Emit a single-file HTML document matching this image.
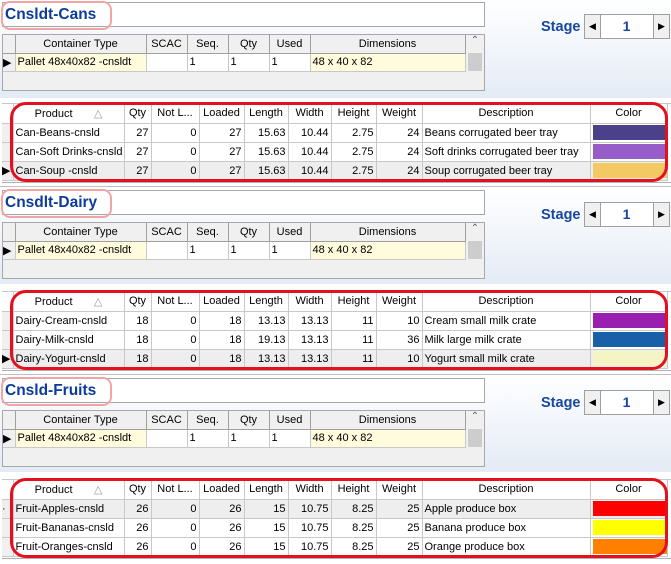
<!DOCTYPE html>
<html><head><meta charset="utf-8"><style>
*{box-sizing:border-box;margin:0;padding:0}
body{width:671px;height:564px;position:relative;overflow:hidden;background:#fff;font-family:"Liberation Sans",sans-serif;font-size:11px;color:#000}
.a{position:absolute}
.bg{left:0;width:671px;height:98px;background:linear-gradient(#fff,#e4ebf6)}
.tb{left:2px;width:483px;height:25px;border:1px solid #a8a8a8;background:#fff}
.hl{left:1px;width:111px;height:29px;border:2px solid #f2a5a5;border-radius:9px}
.tt{left:5px;font-weight:bold;font-size:15.5px;color:#0b3c9c}
.st{left:541px;font-weight:bold;font-size:14.5px;color:#1747a0}
.sp{left:584px;width:86px;height:25px;border:1px solid #a0a0a0;background:#fff}
.sp .l,.sp .r{position:absolute;top:0;width:16px;height:23px;background:#f0f0f0;border-right:1px solid #a0a0a0;font-size:9px;text-align:center;line-height:23px}
.sp .l{left:0}.sp .r{right:0;border-right:none;border-left:1px solid #a0a0a0}
.sp .v{position:absolute;left:16px;right:17px;top:0;line-height:23px;text-align:center;font-weight:bold;font-size:14px;color:#1747a0}
.cg{left:2px;width:483px;height:57px;border:1px solid #a8a8a8;background:#f0f0f0}
table{border-collapse:collapse;table-layout:fixed;position:absolute;left:0;top:0}
td{height:18px;border-right:1px solid #c8c8c8;border-bottom:1px solid #c8c8c8;padding:0 2px;white-space:nowrap;overflow:hidden;background:#fff}
tr.h td{text-align:center;background:#fff}
.cg tr.h td{background:#f0f0f0;border-color:#a0a0a0}
.cg td.y{background:#fffbdc}
td.i{background:#f0f0f0;padding:0;font-size:11px}
td.n{text-align:right}
.sb{position:absolute;left:463px;top:0;width:18px;height:55px;background:#f0f0f0;color:#666;font-size:10px;text-align:center}
.sb .t{position:absolute;left:2px;top:18px;width:14px;height:18px;background:#cdcdcd}
.pg{left:2px;width:669px;height:80px;border-top:1px solid #c8c8c8;border-bottom:1px solid #b0b0b0;background:#fff}
tr.g td{background:#eeeeee}
.pg td{height:19px}
.rr{left:10px;width:658px;height:80px;border:3px solid #e3101f;border-radius:16px}
.sw{display:block;height:15px;margin:0 -2px 0 0}
</style></head><body>

<div class="a bg" style="top:0"></div>
<div class="a tb" style="top:2px"></div>
<div class="a hl" style="top:1px"></div>
<div class="a tt" style="top:6px">Cnsldt-Cans</div>
<div class="a st" style="top:19px">Stage</div>
<div class="a sp" style="top:14px"><div class="l">◀</div><div class="v">1</div><div class="r">▶</div></div>
<div class="a cg" style="top:34px"><table style="width:462px">
<colgroup><col style="width:12px"><col style="width:131px"><col style="width:41px"><col style="width:41px"><col style="width:41px"><col style="width:41px"><col style="width:155px"></colgroup>
<tr class="h"><td class="i"></td><td>Container Type</td><td>SCAC</td><td>Seq.</td><td>Qty</td><td>Used</td><td>Dimensions</td></tr>
<tr><td class="i">▶</td><td class="y">Pallet 48x40x82 -cnsldt</td><td>&nbsp;</td><td>1</td><td>1</td><td>1</td><td class="y">48 x 40 x 82</td></tr>
</table><div class="sb">⌃<div class="t"></div></div></div>
<div class="a pg" style="top:103px"><table style="width:665px">
<colgroup><col style="width:11px"><col style="width:111px"><col style="width:27px"><col style="width:48px"><col style="width:45px"><col style="width:44px"><col style="width:43px"><col style="width:45px"><col style="width:46px"><col style="width:168px"><col style="width:77px"></colgroup>
<tr class="h"><td class="i"></td><td>Product &nbsp; &nbsp; &nbsp; <span style="color:#999">△</span></td><td>Qty</td><td>Not L...</td><td>Loaded</td><td>Length</td><td>Width</td><td>Height</td><td>Weight</td><td>Description</td><td>Color</td></tr>
<tr><td class="i"></td><td>Can-Beans-cnsld</td><td class="n">27</td><td class="n">0</td><td class="n">27</td><td class="n">15.63</td><td class="n">10.44</td><td class="n">2.75</td><td class="n">24</td><td>Beans corrugated beer tray</td><td><span class="sw" style="background:#4b418a"></span></td></tr>
<tr><td class="i"></td><td>Can-Soft Drinks-cnsld</td><td class="n">27</td><td class="n">0</td><td class="n">27</td><td class="n">15.63</td><td class="n">10.44</td><td class="n">2.75</td><td class="n">24</td><td>Soft drinks corrugated beer tray</td><td><span class="sw" style="background:#965cc8"></span></td></tr>
<tr class="g"><td class="i">▶</td><td>Can-Soup -cnsld</td><td class="n">27</td><td class="n">0</td><td class="n">27</td><td class="n">15.63</td><td class="n">10.44</td><td class="n">2.75</td><td class="n">24</td><td>Soup corrugated beer tray</td><td><span class="sw" style="background:#f3c963"></span></td></tr>
</table></div>
<div class="a rr" style="top:102px"></div>

<div class="a bg" style="top:186px;border-top:1px solid #c0c0c0"></div>
<div class="a tb" style="top:190px"></div>
<div class="a hl" style="top:189px"></div>
<div class="a tt" style="top:194px">Cnsdlt-Dairy</div>
<div class="a st" style="top:207px">Stage</div>
<div class="a sp" style="top:202px"><div class="l">◀</div><div class="v">1</div><div class="r">▶</div></div>
<div class="a cg" style="top:222px"><table style="width:462px">
<colgroup><col style="width:12px"><col style="width:131px"><col style="width:41px"><col style="width:41px"><col style="width:41px"><col style="width:41px"><col style="width:155px"></colgroup>
<tr class="h"><td class="i"></td><td>Container Type</td><td>SCAC</td><td>Seq.</td><td>Qty</td><td>Used</td><td>Dimensions</td></tr>
<tr><td class="i">▶</td><td class="y">Pallet 48x40x82 -cnsldt</td><td>&nbsp;</td><td>1</td><td>1</td><td>1</td><td class="y">48 x 40 x 82</td></tr>
</table><div class="sb">⌃<div class="t"></div></div></div>
<div class="a pg" style="top:291px"><table style="width:665px">
<colgroup><col style="width:11px"><col style="width:111px"><col style="width:27px"><col style="width:48px"><col style="width:45px"><col style="width:44px"><col style="width:43px"><col style="width:45px"><col style="width:46px"><col style="width:168px"><col style="width:77px"></colgroup>
<tr class="h"><td class="i"></td><td>Product &nbsp; &nbsp; &nbsp; <span style="color:#999">△</span></td><td>Qty</td><td>Not L...</td><td>Loaded</td><td>Length</td><td>Width</td><td>Height</td><td>Weight</td><td>Description</td><td>Color</td></tr>
<tr><td class="i"></td><td>Dairy-Cream-cnsld</td><td class="n">18</td><td class="n">0</td><td class="n">18</td><td class="n">13.13</td><td class="n">13.13</td><td class="n">11</td><td class="n">10</td><td>Cream small milk crate</td><td><span class="sw" style="background:#9a1fb0"></span></td></tr>
<tr><td class="i"></td><td>Dairy-Milk-cnsld</td><td class="n">18</td><td class="n">0</td><td class="n">18</td><td class="n">19.13</td><td class="n">13.13</td><td class="n">11</td><td class="n">36</td><td>Milk large milk crate</td><td><span class="sw" style="background:#1a60a8"></span></td></tr>
<tr class="g"><td class="i">▶</td><td>Dairy-Yogurt-cnsld</td><td class="n">18</td><td class="n">0</td><td class="n">18</td><td class="n">13.13</td><td class="n">13.13</td><td class="n">11</td><td class="n">10</td><td>Yogurt small milk crate</td><td><span class="sw" style="background:#f4f4c4"></span></td></tr>
</table></div>
<div class="a rr" style="top:290px"></div>

<div class="a bg" style="top:374px;border-top:1px solid #c0c0c0"></div>
<div class="a tb" style="top:378px"></div>
<div class="a hl" style="top:377px"></div>
<div class="a tt" style="top:382px">Cnsld-Fruits</div>
<div class="a st" style="top:395px">Stage</div>
<div class="a sp" style="top:390px"><div class="l">◀</div><div class="v">1</div><div class="r">▶</div></div>
<div class="a cg" style="top:410px"><table style="width:462px">
<colgroup><col style="width:12px"><col style="width:131px"><col style="width:41px"><col style="width:41px"><col style="width:41px"><col style="width:41px"><col style="width:155px"></colgroup>
<tr class="h"><td class="i"></td><td>Container Type</td><td>SCAC</td><td>Seq.</td><td>Qty</td><td>Used</td><td>Dimensions</td></tr>
<tr><td class="i">▶</td><td class="y">Pallet 48x40x82 -cnsldt</td><td>&nbsp;</td><td>1</td><td>1</td><td>1</td><td class="y">48 x 40 x 82</td></tr>
</table><div class="sb">⌃<div class="t"></div></div></div>
<div class="a pg" style="top:479px"><table style="width:665px">
<colgroup><col style="width:11px"><col style="width:111px"><col style="width:27px"><col style="width:48px"><col style="width:45px"><col style="width:44px"><col style="width:43px"><col style="width:45px"><col style="width:46px"><col style="width:168px"><col style="width:77px"></colgroup>
<tr class="h"><td class="i"></td><td>Product &nbsp; &nbsp; &nbsp; <span style="color:#999">△</span></td><td>Qty</td><td>Not L...</td><td>Loaded</td><td>Length</td><td>Width</td><td>Height</td><td>Weight</td><td>Description</td><td>Color</td></tr>
<tr class="g"><td class="i">·</td><td>Fruit-Apples-cnsld</td><td class="n">26</td><td class="n">0</td><td class="n">26</td><td class="n">15</td><td class="n">10.75</td><td class="n">8.25</td><td class="n">25</td><td>Apple produce box</td><td><span class="sw" style="background:#ff0000"></span></td></tr>
<tr><td class="i"></td><td>Fruit-Bananas-cnsld</td><td class="n">26</td><td class="n">0</td><td class="n">26</td><td class="n">15</td><td class="n">10.75</td><td class="n">8.25</td><td class="n">25</td><td>Banana produce box</td><td><span class="sw" style="background:#ffff00"></span></td></tr>
<tr><td class="i"></td><td>Fruit-Oranges-cnsld</td><td class="n">26</td><td class="n">0</td><td class="n">26</td><td class="n">15</td><td class="n">10.75</td><td class="n">8.25</td><td class="n">25</td><td>Orange produce box</td><td><span class="sw" style="background:#ff8000"></span></td></tr>
</table></div>
<div class="a rr" style="top:478px"></div>
</body></html>
